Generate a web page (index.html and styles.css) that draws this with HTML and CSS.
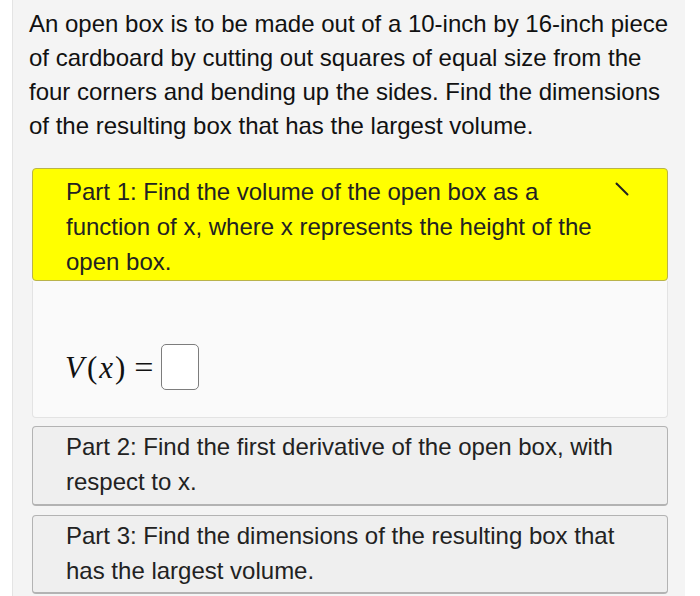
FILE: index.html
```html
<!DOCTYPE html>
<html lang="en">
<head>
<meta charset="utf-8">
<title>Open box problem</title>
<link rel="stylesheet" href="styles.css">
</head>
<body>
<main class="page">
  <p class="question">An open box is to be made out of a 10-inch by 16-inch piece of cardboard by cutting out squares of equal size from the four corners and bending up the sides. Find the dimensions of the resulting box that has the largest volume.</p>
  <div class="parts">
    <section class="part part-open">
      <div class="part-head part-head-active">
        <span class="part-text">Part 1: Find the volume of the open box as a function of x, where x represents the height of the open box.</span>
        <svg class="chevron" width="14" height="14" viewBox="0 0 14 14"><path d="M1.5 1.5 L12.5 12.5" stroke="#222" stroke-width="2" stroke-linecap="round" fill="none"/></svg>
      </div>
      <div class="part-body">
        <div class="math">
          <span class="mi mv">V</span><span class="mo">(</span><span class="mi mx">x</span><span class="mo">)</span><span class="eq">=</span><span class="answer-box"></span>
        </div>
      </div>
    </section>
    <section class="part part-closed part-2">
      <span class="part-text">Part 2: Find the first derivative of the open box, with respect to x.</span>
    </section>
    <section class="part part-closed part-3">
      <span class="part-text">Part 3: Find the dimensions of the resulting box that has the largest volume.</span>
    </section>
  </div>
</main>
</body>
</html>
```

FILE: styles.css
```css
html, body {
  margin: 0;
  padding: 0;
  background: #ffffff;
  height: 100%;
}

body {
  font-family: "Liberation Sans", Arial, Helvetica, sans-serif;
  overflow: hidden;
}

.page {
  margin-left: 12px;
  width: 673px;
  min-height: 596px;
  background: #f4f4f4;
  border-left: 1px solid #e4e4e4;
  box-sizing: border-box;
}

.question {
  margin: 0;
  padding: 7px 8px 0 16px;
  font-size: 24px;
  line-height: 34px;
  color: #111;
}

.parts {
  padding: 25px 17px 0 19px;
  display: flex;
  flex-direction: column;
}

.part {
  font-size: 24px;
  line-height: 35px;
  color: #222;
}

.part-open {
  display: flex;
  flex-direction: column;
}

.part-head-active {
  display: flex;
  align-items: flex-start;
  background: #ffff00;
  border: 1px solid #b9b34a;
  border-radius: 4px;
  padding: 5px 38px 0 33px;
  height: 113px;
  box-sizing: border-box;
}

.part-head-active .part-text {
  flex: 1;
}

.chevron {
  flex: none;
  margin-top: 8px;
  margin-left: 8px;
}

.part-body {
  background: #fafafa;
  border: 1px solid #e3e3e3;
  border-top: none;
  border-radius: 0 0 4px 4px;
  height: 137px;
  box-sizing: border-box;
  padding: 63px 0 0 32px;
}

.math {
  display: flex;
  align-items: center;
  height: 46px;
  font-family: "Liberation Serif", "Times New Roman", serif;
  font-size: 31px;
  color: #111;
}

.mi {
  font-style: italic;
}

.mv {
  margin-right: 3px;
}

.mo {
  font-style: normal;
}

.mx {
  padding: 0 2px 0 2px;
}

.eq {
  margin: 0 8px 0 10px;
  transform: scaleX(1.1);
}

.answer-box {
  width: 38px;
  height: 46px;
  box-sizing: border-box;
  border: 1.5px solid #7d7d7d;
  border-radius: 5px;
  background: #fff;
}

.part-closed {
  background: #efefef;
  border: 1px solid #b3b3b3;
  border-bottom-width: 2px;
  border-radius: 4px;
  padding: 2px 29px 0 33px;
  box-sizing: border-box;
}

.part-2 {
  margin-top: 8px;
  height: 80px;
}

.part-3 {
  margin-top: 9px;
  height: 79px;
}
```
